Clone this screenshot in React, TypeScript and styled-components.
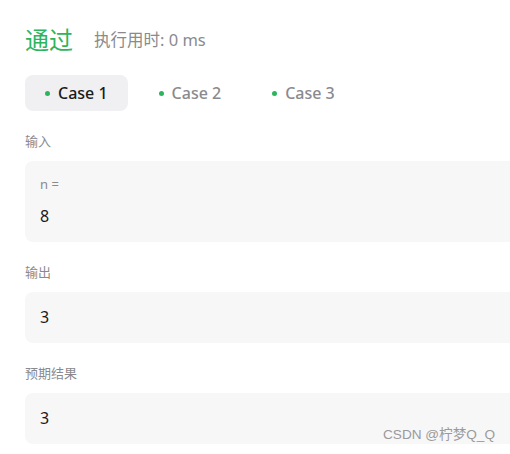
import React from 'react';
import styled, { createGlobalStyle } from 'styled-components';

const GlobalStyle = createGlobalStyle`
  html, body {
    margin: 0;
    padding: 0;
    background: #ffffff;
    overflow: hidden;
  }
  body {
    font-family: "Noto Sans", "Noto Sans CJK SC", sans-serif;
  }
`;

const Page = styled.div`
  position: relative;
  width: 510px;
  height: 454px;
  padding: 24px 0 0 25px;
  box-sizing: border-box;
  overflow: hidden;
`;

const Header = styled.div`
  display: flex;
  align-items: center;
  gap: 21px;
  height: 30px;
`;

const Status = styled.span`
  font-family: "Noto Sans CJK SC", sans-serif;
  font-size: 24px;
  line-height: 30px;
  color: #2db55d;
`;

const Runtime = styled.span`
  font-family: "Noto Sans", "Noto Sans CJK SC", sans-serif;
  font-size: 16.5px;
  line-height: 24px;
  color: #8a8a8e;
  margin-top: 1px;
`;

const Tabs = styled.div`
  display: flex;
  gap: 11px;
  margin-top: 21px;
`;

const Tab = styled.div<{ $active?: boolean }>`
  display: flex;
  align-items: center;
  gap: 8px;
  height: 36px;
  padding: 0 20px;
  border-radius: 8px;
  background: ${(p) => (p.$active ? '#f0f0f2' : 'transparent')};
  color: ${(p) => (p.$active ? '#1a1a1a' : '#8a8a8e')};
  font-size: 16px;
  font-weight: 500;
`;

const Dot = styled.span`
  width: 5px;
  height: 5px;
  border-radius: 50%;
  background: #2db55d;
`;

const Section = styled.div`
  margin-top: 20px;
`;

const Label = styled.div`
  font-family: "Noto Sans CJK SC", sans-serif;
  font-size: 13px;
  line-height: 20px;
  color: #8a8a8e;
  margin-bottom: 10px;
`;

const Box = styled.div`
  width: 520px;
  border-radius: 8px;
  background: #f7f7f8;
  padding: 13px 15px 14px;
  box-sizing: border-box;
`;

const VarName = styled.div`
  font-size: 13px;
  line-height: 20px;
  color: #8a8a8e;
  margin-bottom: 10px;
`;

const Value = styled.div`
  font-size: 16px;
  line-height: 24px;
  color: #1a1a1a;
`;

const Watermark = styled.div`
  position: absolute;
  left: 383px;
  top: 425px;
  font-family: "Liberation Sans", "Noto Sans CJK SC", sans-serif;
  font-size: 13.6px;
  line-height: 20px;
  color: #9a9a9a;
`;

const cases = ['Case 1', 'Case 2', 'Case 3'];

export default function App() {
  return (
    <>
      <GlobalStyle />
      <Page>
        <Header>
          <Status>通过</Status>
          <Runtime>执行用时: 0 ms</Runtime>
        </Header>
        <Tabs>
          {cases.map((c, i) => (
            <Tab key={c} $active={i === 0}>
              <Dot />
              {c}
            </Tab>
          ))}
        </Tabs>
        <Section>
          <Label>输入</Label>
          <Box>
            <VarName>n =</VarName>
            <Value>8</Value>
          </Box>
        </Section>
        <Section>
          <Label>输出</Label>
          <Box>
            <Value>3</Value>
          </Box>
        </Section>
        <Section>
          <Label>预期结果</Label>
          <Box>
            <Value>3</Value>
          </Box>
        </Section>
        <Watermark>CSDN @柠梦Q_Q</Watermark>
      </Page>
    </>
  );
}
